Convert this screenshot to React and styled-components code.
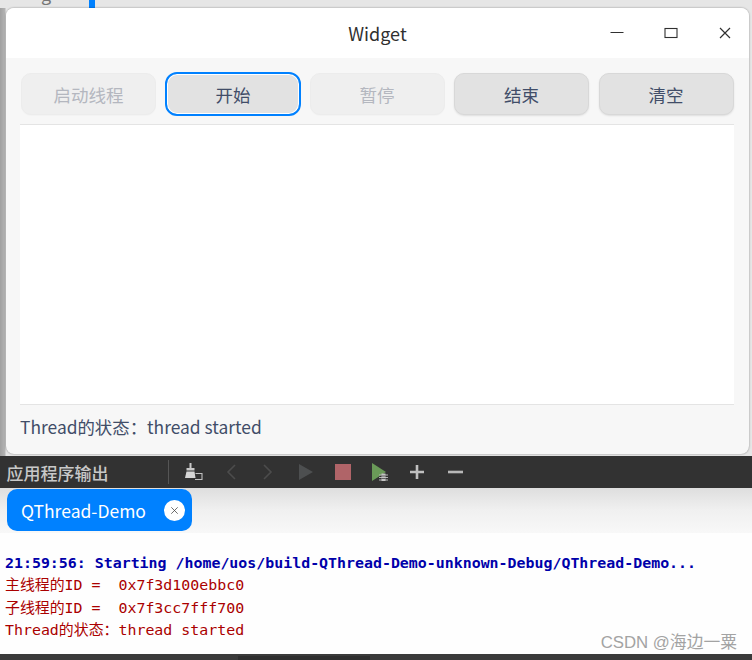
import styled, { createGlobalStyle } from "styled-components";

const GlobalStyle = createGlobalStyle`
  html, body {
    margin: 0;
    padding: 0;
    background: #3a3a3a;
  }
  * {
    box-sizing: border-box;
  }
`;

const UI_FONT = `"Noto Sans CJK SC", "Noto Sans", sans-serif`;
const MONO_FONT = `"DejaVu Sans Mono", "Noto Sans CJK SC", monospace`;

const Page = styled.div`
  width: 752px;
  height: 660px;
  display: flex;
  flex-direction: column;
  overflow: hidden;
  font-family: ${UI_FONT};
`;

const Desktop = styled.div`
  height: 456px;
  display: flex;
  flex-direction: column;
  background: linear-gradient(90deg, #a0a0a0 0, #b4b4b4 5px, #e6e6e6 6px);
`;

const TopStrip = styled.div`
  height: 8px;
  flex-shrink: 0;
  display: flex;
  background: #e6e6e6;
  overflow: hidden;
`;

const ClippedWord = styled.span`
  margin-left: 41px;
  width: 48px;
  height: 8px;
  font-size: 18px;
  line-height: 8px;
  color: #777;
  transform: translateY(-11px);
`;

const BlueMark = styled.div`
  width: 6px;
  height: 8px;
  background: #0081ff;
`;

const WindowSlot = styled.div`
  height: 446px;
  margin: 0 3px 0 6px;
`;

const Window = styled.div`
  height: 100%;
  display: flex;
  flex-direction: column;
  background: #f7f7f7;
  border-radius: 8px;
  overflow: hidden;
  box-shadow: 0 0 2px rgba(0, 0, 0, 0.45);
`;

const TitleBar = styled.div`
  height: 50px;
  flex-shrink: 0;
  position: relative;
  display: flex;
  align-items: center;
  justify-content: center;
  background: #fff;
`;

const Title = styled.span`
  font-size: 18px;
  color: #303030;
`;

const WindowControls = styled.div`
  position: absolute;
  right: -3px;
  top: 0;
  height: 50px;
  display: flex;
  align-items: center;
`;

const WindowControl = styled.div`
  width: 54px;
  height: 50px;
  display: flex;
  align-items: center;
  justify-content: center;
`;

const Content = styled.div`
  flex: 1;
  display: flex;
  flex-direction: column;
  padding: 15px 15px 0 14px;
`;

const ButtonRow = styled.div`
  display: flex;
  gap: 9.5px;
  padding-left: 1px;
  height: 42px;
`;

const PushButton = styled.div`
  width: 135px;
  height: 42px;
  flex-shrink: 0;
  display: flex;
  align-items: center;
  justify-content: center;
  font-size: 17.5px;
  border-radius: 10px;
  color: ${(p) => (p.$disabled ? "#b4b7bf" : "#414d68")};
  background: ${(p) => (p.$disabled ? "#efefef" : "#e2e2e2")};
  border: 1px solid ${(p) => (p.$disabled ? "#ececec" : "#d8d8d8")};
  box-shadow: ${(p) =>
    p.$focused
      ? "inset 0 0 0 1px #fff"
      : p.$disabled
        ? "0 1px 1px rgba(0,0,0,0.02)"
        : "0 1px 2px rgba(0,0,0,0.1)"};
  ${(p) =>
    p.$focused &&
    `
    border: 2px solid #0081ff;
    width: 136px;
    height: 44px;
    margin: -1px -1px -1px -0.5px;
    border-radius: 12px;
  `}
`;

const TextArea = styled.div`
  height: 281px;
  margin: 9px 0 0 0;
  background: #fff;
  border-top: 1px solid #e4e4e4;
  border-bottom: 1px solid #e4e4e4;
`;

const StatusLabel = styled.div`
  height: 42px;
  display: flex;
  align-items: center;
  font-size: 17.4px;
  color: #414d68;
`;

const OutputBar = styled.div`
  height: 32px;
  flex-shrink: 0;
  display: flex;
  align-items: center;
  background: #323232;
  padding-left: 6.5px;
`;

const OutputTitle = styled.span`
  width: 161.5px;
  font-size: 17px;
  font-weight: 500;
  color: #c8c8c8;
`;

const Divider = styled.div`
  width: 1px;
  height: 24px;
  background: #555;
  margin-right: 6px;
`;

const ToolButton = styled.div`
  width: 37.3px;
  height: 32px;
  display: flex;
  align-items: center;
  justify-content: center;
`;

const TabStrip = styled.div`
  height: 45px;
  flex-shrink: 0;
  padding: 1px 0 0 7px;
  background: linear-gradient(180deg, #dedede 0, #f0f0f0 22px, #f8f8f8 100%);
`;

const Tab = styled.div`
  width: 185px;
  height: 42px;
  display: flex;
  align-items: center;
  justify-content: space-between;
  padding: 0 7px 0 14px;
  border-radius: 10px;
  background: #0081ff;
  color: #fff;
  font-size: 17.5px;
`;

const TabClose = styled.div`
  width: 21px;
  height: 21px;
  border-radius: 50%;
  background: #fff;
  display: flex;
  align-items: center;
  justify-content: center;
`;

const LogPane = styled.div`
  height: 121px;
  flex-shrink: 0;
  position: relative;
  padding: 19px 0 0 5px;
  background: #fefefe;
  font-family: ${MONO_FONT};
  font-size: 14.92px;
  line-height: 22.4px;
  white-space: pre;
`;

const LogLine = styled.div`
  color: ${(p) => (p.$command ? "#0000aa" : "#aa0000")};
  font-weight: ${(p) => (p.$command ? 700 : 400)};
`;

const Watermark = styled.span`
  position: absolute;
  right: 15px;
  bottom: -1px;
  font-family: "Liberation Sans", "Noto Sans CJK SC", sans-serif;
  font-size: 16.8px;
  line-height: 24px;
  color: #a3a3a3;
`;

const BottomBar = styled.div`
  height: 6px;
  flex-shrink: 0;
  padding-left: 238px;
  background: #3a3a3a;
`;

const ScrollThumb = styled.div`
  width: 132px;
  height: 6px;
  margin-top: 2px;
  background: #2e2e2e;
`;

function MinimizeIcon() {
  return (
    <svg width="14" height="14" viewBox="0 0 14 14">
      <path d="M0.5 6.5h13" stroke="#303030" strokeWidth="1.1" />
    </svg>
  );
}

function MaximizeIcon() {
  return (
    <svg width="14" height="14" viewBox="0 0 14 14">
      <rect x="1" y="2.5" width="12" height="9" fill="none" stroke="#303030" strokeWidth="1.1" />
    </svg>
  );
}

function CloseIcon({ size = 14, color = "#303030" }) {
  return (
    <svg width={size} height={size} viewBox="0 0 14 14">
      <path d="M2 2l10 10M12 2L2 12" stroke={color} strokeWidth="1.2" />
    </svg>
  );
}

function BroomIcon() {
  return (
    <svg width="18" height="18" viewBox="0 0 18 18">
      <path d="M4.5 0h2v5h3v2.5h-8V5h3z" fill="#c8c8c8" />
      <path d="M1.5 8.5h8l1 6.5H0z" fill="#d6d6d6" />
      <path d="M10.5 10.5h6.5v6H10" fill="none" stroke="#c0c0c0" strokeWidth="1.1" />
    </svg>
  );
}

function ChevronIcon({ flip }) {
  return (
    <svg width="14" height="18" viewBox="0 0 14 18">
      <path
        d={flip ? "M3 2l7 7-7 7" : "M11 2L4 9l7 7"}
        fill="none"
        stroke="#4c4c4c"
        strokeWidth="1.6"
      />
    </svg>
  );
}

function PlayIcon() {
  return (
    <svg width="16" height="18" viewBox="0 0 16 18">
      <path d="M1 1l14 8-14 8z" fill="#4d4f50" />
    </svg>
  );
}

function StopIcon() {
  return (
    <svg width="16" height="16" viewBox="0 0 16 16">
      <rect width="16" height="16" fill="#b06468" />
    </svg>
  );
}

function DebugIcon() {
  return (
    <svg width="18" height="18" viewBox="0 0 18 18">
      <path d="M1 0l14 9-14 9z" fill="#6a9a58" />
      <path d="M8 12h9M8 14.5h9M8 17h9" stroke="#b4b4b4" strokeWidth="1" />
      <rect x="10.5" y="10.5" width="4" height="7.5" fill="#c4c4c4" />
      <path d="M10.5 13h4M10.5 15.5h4" stroke="#444" strokeWidth="0.8" />
    </svg>
  );
}

function PlusIcon() {
  return (
    <svg width="16" height="16" viewBox="0 0 16 16">
      <path d="M8 1v14M1 8h14" stroke="#c0c0c0" strokeWidth="2.6" />
    </svg>
  );
}

function MinusIcon() {
  return (
    <svg width="16" height="16" viewBox="0 0 16 16">
      <path d="M1 8h15" stroke="#b8b8b8" strokeWidth="2.6" />
    </svg>
  );
}

const buttons = [
  { label: "启动线程", disabled: true },
  { label: "开始", focused: true },
  { label: "暂停", disabled: true },
  { label: "结束" },
  { label: "清空" },
];

const tools = [
  <BroomIcon />,
  <ChevronIcon />,
  <ChevronIcon flip />,
  <PlayIcon />,
  <StopIcon />,
  <DebugIcon />,
  <PlusIcon />,
  <MinusIcon />,
];

export default function App() {
  return (
    <Page>
      <GlobalStyle />
      <Desktop>
        <TopStrip>
          <ClippedWord>g</ClippedWord>
          <BlueMark />
        </TopStrip>
        <WindowSlot>
          <Window>
            <TitleBar>
              <Title>Widget</Title>
              <WindowControls>
                <WindowControl>
                  <MinimizeIcon />
                </WindowControl>
                <WindowControl>
                  <MaximizeIcon />
                </WindowControl>
                <WindowControl>
                  <CloseIcon />
                </WindowControl>
              </WindowControls>
            </TitleBar>
            <Content>
              <ButtonRow>
                {buttons.map((b) => (
                  <PushButton key={b.label} $disabled={b.disabled} $focused={b.focused}>
                    {b.label}
                  </PushButton>
                ))}
              </ButtonRow>
              <TextArea />
              <StatusLabel>Thread的状态：thread started</StatusLabel>
            </Content>
          </Window>
        </WindowSlot>
      </Desktop>
      <OutputBar>
        <OutputTitle>应用程序输出</OutputTitle>
        <Divider />
        {tools.map((icon, i) => (
          <ToolButton key={i}>{icon}</ToolButton>
        ))}
      </OutputBar>
      <TabStrip>
        <Tab>
          QThread-Demo
          <TabClose>
            <CloseIcon size={9} color="#444" />
          </TabClose>
        </Tab>
      </TabStrip>
      <LogPane>
        <LogLine $command>21:59:56: Starting /home/uos/build-QThread-Demo-unknown-Debug/QThread-Demo...</LogLine>
        <LogLine>主线程的ID =  0x7f3d100ebbc0</LogLine>
        <LogLine>子线程的ID =  0x7f3cc7fff700</LogLine>
        <LogLine>Thread的状态：thread started</LogLine>
        <Watermark>CSDN @海边一粟</Watermark>
      </LogPane>
      <BottomBar>
        <ScrollThumb />
      </BottomBar>
    </Page>
  );
}
